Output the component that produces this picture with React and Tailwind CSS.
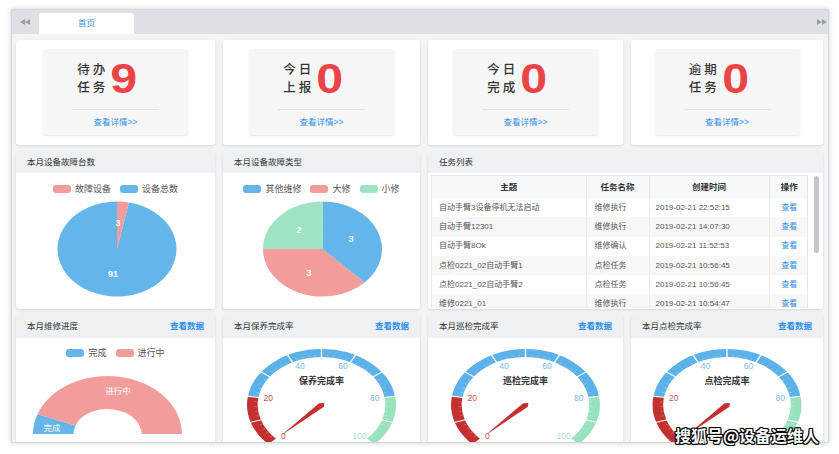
const BLUE = "#64b6ea";
const PINK = "#f29c9c";
const GREEN = "#9fe3c3";
const G_RED = "#c4302f";
const G_BLUE = "#5cb1e8";
const G_GREEN = "#98e2bd";

const stats = [
  { w: "w-[199px]", top: "待办", bottom: "任务", num: "9" },
  { w: "w-[197px]", top: "今日", bottom: "上报", num: "0" },
  { w: "w-[195px]", top: "今日", bottom: "完成", num: "0" },
  { w: "w-[192px]", top: "逾期", bottom: "任务", num: "0" },
];

const tasks = [
  ["自动手臂3设备停机无法启动", "维修执行", "2019-02-21 22:52:15"],
  ["自动手臂12301", "维修执行", "2019-02-21 14:07:30"],
  ["自动手臂8Ok", "维修确认", "2019-02-21 11:52:53"],
  ["点检0221_02自动手臂1", "点检任务", "2019-02-21 10:56:45"],
  ["点检0221_02自动手臂2", "点检任务", "2019-02-21 10:56:45"],
  ["维修0221_01", "维修执行", "2019-02-21 10:54:47"],
];

// point on an ellipse, angle clockwise from 12 o'clock
const ept = (cx, cy, rx, ry, deg) => {
  const a = (deg * Math.PI) / 180;
  return [cx + rx * Math.sin(a), cy - ry * Math.cos(a)];
};

const slice = (cx, cy, rx, ry, a0, a1) => {
  const [x0, y0] = ept(cx, cy, rx, ry, a0);
  const [x1, y1] = ept(cx, cy, rx, ry, a1);
  const large = a1 - a0 > 180 ? 1 : 0;
  return `M${cx} ${cy}L${x0} ${y0}A${rx} ${ry} 0 ${large} 1 ${x1} ${y1}Z`;
};

const ring = (cx, cy, rx, ry, irx, iry, a0, a1) => {
  const [x0, y0] = ept(cx, cy, rx, ry, a0);
  const [x1, y1] = ept(cx, cy, rx, ry, a1);
  const [x2, y2] = ept(cx, cy, irx, iry, a1);
  const [x3, y3] = ept(cx, cy, irx, iry, a0);
  const large = a1 - a0 > 180 ? 1 : 0;
  return `M${x0} ${y0}A${rx} ${ry} 0 ${large} 1 ${x1} ${y1}L${x2} ${y2}A${irx} ${iry} 0 ${large} 0 ${x3} ${y3}Z`;
};

const Legend = ({ items, pt = "pt-[11px]" }) => (
  <div className={`h-[26px] ${pt} flex justify-center gap-[9px]`}>
    {items.map(([color, label]) => (
      <div key={label} className="flex items-center gap-[4px] h-[10px]">
        <span className="w-[18px] h-[8px] rounded-[3px]" style={{ background: color }} />
        <span className="text-[9px] leading-none text-[#555]">{label}</span>
      </div>
    ))}
  </div>
);

const Card = ({ title, link, className = "", children, hh = "h-[22px]" }) => (
  <div className={`bg-white rounded-[3px] shadow-[0_1px_3px_rgba(0,0,0,0.12)] overflow-hidden flex flex-col ${className}`}>
    <div className={`${hh} shrink-0 bg-[#eef0f3] flex items-center justify-between pl-[11px] pr-[11px]`}>
      <span className="text-[8.5px] text-[#333]">{title}</span>
      {link && <span className="text-[8.5px] font-bold text-[#2f8ee8]">{link}</span>}
    </div>
    <div className="flex-1">{children}</div>
  </div>
);

const Gauge = ({ w, title }) => {
  const cx = w / 2;
  const cy = 67;
  const R = 52;
  const ang = (v) => ((225 - 270 * v) * Math.PI) / 180;
  const p = (v, r) => [r * Math.cos(ang(v)), -r * Math.sin(ang(v))];
  const arc = (v0, v1) => {
    const [x0, y0] = p(v0, R);
    const [x1, y1] = p(v1, R);
    const large = (v1 - v0) * 270 > 180 ? 1 : 0;
    return `M${x0} ${y0}A${R} ${R} 0 ${large} 1 ${x1} ${y1}`;
  };
  const ticks = [];
  for (let i = 0; i <= 50; i++) {
    const v = i / 50;
    const major = i % 5 === 0;
    const [xa, ya] = p(v, major ? R - 4.5 : R - 3.5);
    const [xb, yb] = p(v, major ? R + 4.5 : R - 1.5);
    ticks.push(
      <line key={i} x1={xa} y1={ya} x2={xb} y2={yb} stroke="#fff" strokeWidth={major ? 1.1 : 0.5} opacity={major ? 0.95 : 0.45} />
    );
  }
  const labels = [
    [0, "0", G_RED, 0],
    [0.2, "20", G_RED, 0],
    [0.4, "40", G_BLUE, 3],
    [0.6, "60", G_BLUE, -3],
    [0.8, "80", G_BLUE, 0],
    [1, "100", G_GREEN, 0],
  ];
  return (
    <svg width={w} height={112} className="block">
      <g transform={`translate(${cx} ${cy}) scale(1.33 1)`}>
        <path d={arc(0, 0.2)} stroke={G_RED} strokeWidth={8} fill="none" />
        <path d={arc(0.2, 0.8)} stroke={G_BLUE} strokeWidth={8} fill="none" />
        <path d={arc(0.8, 1)} stroke={G_GREEN} strokeWidth={8} fill="none" />
        {ticks}
        <polygon points="0,-43 2.6,0 0,3 -2.6,0" fill={G_RED} transform="rotate(225)" />
      </g>
      {labels.map(([v, t, c, dx]) => {
        const a = ang(v);
        const x = cx + 54 * Math.cos(a) + dx;
        const y = cy - 44 * Math.sin(a) + 3;
        return (
          <text key={t} x={x} y={y} fontSize="8.5" fill={c} textAnchor="middle" opacity="0.85">
            {t}
          </text>
        );
      })}
      <text x={cx} y={cy - 21} fontSize="9" fontWeight="bold" fill="#333" textAnchor="middle">
        {title}
      </text>
      <text x={cx} y={cy + 48} fontSize="12" fontWeight="bold" fill={G_RED} textAnchor="middle">
        0%
      </text>
    </svg>
  );
};

const Arrows = ({ dir }) => (
  <svg width="11" height="6" viewBox="0 0 11 6">
    {dir === "left" ? (
      <>
        <polygon points="0,3 5,0 5,6" fill="#9a9ea4" />
        <polygon points="5,3 10,0 10,6" fill="#9a9ea4" />
      </>
    ) : (
      <>
        <polygon points="11,3 6,0 6,6" fill="#9a9ea4" />
        <polygon points="6,3 1,0 1,6" fill="#9a9ea4" />
      </>
    )}
  </svg>
);

export default function App() {
  return (
    <div className="relative w-[839px] h-[454px] bg-white overflow-hidden font-['Liberation_Sans','Noto_Sans_CJK_SC',sans-serif]">
      <div className="ml-[11px] mt-[9px] w-[818px] h-[434px] overflow-hidden flex flex-col bg-[#f3f4f6] border border-[#d6d8db] shadow-[0_0_5px_rgba(0,0,0,0.2)]">
        {/* tab bar */}
        <div className="h-[24px] shrink-0 bg-[#dde0e4] flex items-end">
          <div className="w-[27px] h-full flex items-center justify-center">
            <Arrows dir="left" />
          </div>
          <div className="w-[95px] h-[21px] bg-white rounded-t-[3px] flex items-center justify-center text-[8.5px] text-[#2f8ee8]">
            首页
          </div>
          <div className="flex-1" />
          <div className="w-[14px] h-full flex items-center justify-center">
            <Arrows dir="right" />
          </div>
        </div>

        <div className="pl-[4px] pt-[6px] flex flex-col gap-[6px]">
          {/* row 1 */}
          <div className="flex gap-[8px]">
            {stats.map((s, i) => (
              <div key={i} className={`${s.w} h-[105px] bg-white rounded-[3px] shadow-[0_1px_3px_rgba(0,0,0,0.12)] pt-[9px]`}>
                <div className="mx-auto w-[145px] h-[86px] bg-[#f6f6f7] rounded-[3px] shadow-[0_1px_2px_rgba(0,0,0,0.1)] flex flex-col items-center">
                  <div className="h-[60px] flex items-center pr-[18px] gap-[4px]">
                    <div className="flex flex-col text-[12.5px] leading-[18px] tracking-[3px] text-[#333] font-medium">
                      <span>{s.top}</span>
                      <span>{s.bottom}</span>
                    </div>
                    <span className="text-[42px] leading-none font-bold text-[#ec4446] scale-x-[1.15]">{s.num}</span>
                  </div>
                  <div className="w-[87px] h-px bg-[#e3e3e3]" />
                  <div className="mt-[6px] text-[8.5px] text-[#2f8ee8]">查看详情&gt;&gt;</div>
                </div>
              </div>
            ))}
          </div>

          {/* row 2 */}
          <div className="flex gap-[8px] h-[158px]">
            <Card title="本月设备故障台数" className="w-[199px]">
              <Legend items={[[PINK, "故障设备"], [BLUE, "设备总数"]]} />
              <svg width="199" height="110" className="block">
                <path d={slice(101, 50, 59.5, 47.5, 11.5, 360)} fill={BLUE} />
                <path d={slice(101, 50, 59.5, 47.5, 0, 11.5)} fill={PINK} />
                <text x="102" y="27" fontSize="9" fill="#fff" textAnchor="middle" fontWeight="bold">3</text>
                <text x="97" y="78" fontSize="9" fill="#fff" textAnchor="middle" fontWeight="bold">91</text>
              </svg>
            </Card>
            <Card title="本月设备故障类型" className="w-[197px]">
              <Legend items={[[BLUE, "其他维修"], [PINK, "大修"], [GREEN, "小修"]]} />
              <svg width="197" height="110" className="block">
                <path d={slice(99.5, 50, 59.5, 47.5, 0, 135)} fill={BLUE} />
                <path d={slice(99.5, 50, 59.5, 47.5, 135, 270)} fill={PINK} />
                <path d={slice(99.5, 50, 59.5, 47.5, 270, 360)} fill={GREEN} />
                <text x="128" y="43" fontSize="9" fill="#fff" textAnchor="middle" fontWeight="bold">3</text>
                <text x="86" y="77" fontSize="9" fill="#fff" textAnchor="middle" fontWeight="bold">3</text>
                <text x="76" y="34" fontSize="9" fill="#fff" textAnchor="middle" fontWeight="bold">2</text>
              </svg>
            </Card>
            <Card title="任务列表" className="w-[395px]">
              <div className="flex pl-[3px] pt-[2px] h-full">
                <div className="w-[377px] h-[133px] overflow-hidden border border-[#e6e6e6] border-b-0">
                  <table className="table-fixed w-[377px] border-collapse text-[8px] text-[#555]">
                    <colgroup>
                      <col className="w-[154px]" />
                      <col className="w-[63px]" />
                      <col className="w-[120px]" />
                      <col className="w-[40px]" />
                    </colgroup>
                    <thead>
                      <tr className="h-[22px] bg-[#f7f8f9] text-[#333] font-bold text-[8.5px]">
                        <th className="border-r border-[#e6e6e6] font-bold">主题</th>
                        <th className="border-r border-[#e6e6e6] font-bold">任务名称</th>
                        <th className="border-r border-[#e6e6e6] font-bold">创建时间</th>
                        <th className="font-bold">操作</th>
                      </tr>
                    </thead>
                    <tbody>
                      {tasks.map((t, i) => (
                        <tr key={i} className={`h-[19.3px] ${i % 2 ? "bg-[#f7f7f8]" : "bg-white"}`}>
                          <td className="pl-[7px] border-r border-[#ececec] whitespace-nowrap">{t[0]}</td>
                          <td className="pl-[8px] border-r border-[#ececec] whitespace-nowrap">{t[1]}</td>
                          <td className="pl-[6px] border-r border-[#ececec] whitespace-nowrap">{t[2]}</td>
                          <td className="text-center text-[#2f8ee8]">查看</td>
                        </tr>
                      ))}
                    </tbody>
                  </table>
                </div>
                <div className="ml-[6px] pt-[1px]">
                  <div className="w-[5px] h-[77px] rounded-full bg-[#c4c6c9]" />
                </div>
              </div>
            </Card>
          </div>

          {/* row 3 */}
          <div className="flex gap-[8px] h-[140px] -mt-px">
            <Card title="本月维修进度" link="查看数据" className="w-[199px]" hh="h-[24px]">
              <Legend items={[[BLUE, "完成"], [PINK, "进行中"]]} pt="pt-[10px]" />
              <svg width="199" height="90" className="block">
                <path d={ring(91.5, 70, 74.5, 58, 34, 25, 270, 290)} fill={BLUE} />
                <path d={ring(91.5, 70, 74.5, 58, 34, 25, 290, 450)} fill={PINK} />
                <text x="36" y="67" fontSize="8.5" fill="#fff" textAnchor="middle">完成</text>
                <text x="102" y="30" fontSize="8.5" fill="#fff" textAnchor="middle">进行中</text>
              </svg>
            </Card>
            <Card title="本月保养完成率" link="查看数据" className="w-[197px]" hh="h-[24px]">
              <Gauge w={197} title="保养完成率" />
            </Card>
            <Card title="本月巡检完成率" link="查看数据" className="w-[195px]" hh="h-[24px]">
              <Gauge w={195} title="巡检完成率" />
            </Card>
            <Card title="本月点检完成率" link="查看数据" className="w-[192px]" hh="h-[24px]">
              <Gauge w={192} title="点检完成率" />
            </Card>
          </div>
        </div>
      </div>

      <div className="absolute left-[675px] top-[425px] text-[16px] leading-[20px] font-bold text-white whitespace-nowrap font-['Noto_Sans_CJK_SC',sans-serif] [text-shadow:1px_1px_0_#000,-1px_-1px_0_#000,1px_-1px_0_#000,-1px_1px_0_#000,0_1px_0_#000,0_-1px_0_#000,1px_0_0_#000,-1px_0_0_#000]">
        搜狐号@设备运维人
      </div>
    </div>
  );
}
